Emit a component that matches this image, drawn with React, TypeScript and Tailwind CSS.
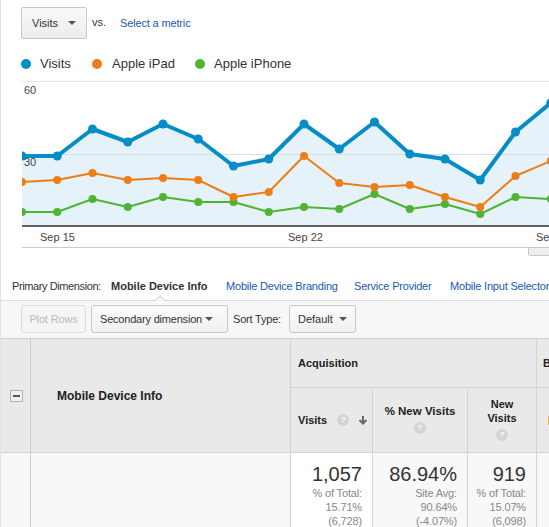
import React from "react";

const xs = Array.from({ length: 16 }, (_, i) => 22 + i * 35.25);
const visits = [156, 156, 129, 142, 124, 139, 166, 159, 124, 149, 122, 154, 159, 180, 132, 103];
const ipad = [182, 180, 173, 180, 178, 180, 197, 192, 156, 183, 187, 185, 197, 207, 176, 161];
const iphone = [212, 212, 199, 207, 197, 202, 202, 212, 207, 209, 194, 209, 204, 214, 197, 199];

const pts = (ys: number[]) => ys.map((y, i) => `${xs[i]},${y}`).join(" ");

const FONT = "Liberation Sans, Arial, sans-serif";

function Caret() {
  return <span className="h-0 w-0 border-x-[4px] border-t-[4px] border-x-transparent border-t-[#555]" />;
}

function Help() {
  return (
    <span className="inline-flex h-[12px] w-[12px] items-center justify-center rounded-full bg-[#d4d4d4] text-[8px] font-bold leading-none text-white">
      ?
    </span>
  );
}

function Series({ ys, color, width, r }: { ys: number[]; color: string; width: number; r: number }) {
  return (
    <g>
      <polyline points={pts(ys)} fill="none" stroke={color} strokeWidth={width} strokeLinejoin="round" />
      {ys.map((y, i) => (
        <circle key={i} cx={xs[i]} cy={y} r={r} fill={color} />
      ))}
    </g>
  );
}

function Chart() {
  return (
    <svg width={548} height={199} viewBox="1 76 548 199" className="mt-[4px] block">
      <defs>
        <clipPath id="plot">
          <rect x={22} y={76} width={540} height={151} />
        </clipPath>
      </defs>
      <line x1={22} x2={549} y1={81.5} y2={81.5} stroke="#e6e6e6" />
      <g clipPath="url(#plot)">
        <polygon points={`22,226 ${pts(visits)} 551,226`} fill="#e5f2f9" />
        <line x1={22} x2={549} y1={154.5} y2={154.5} stroke="#d5e0e6" />
        <Series ys={iphone} color="#50b432" width={2} r={4} />
        <Series ys={ipad} color="#ed7e17" width={2} r={4} />
        <Series ys={visits} color="#058dc7" width={4} r={4.5} />
      </g>
      <line x1={22} x2={549} y1={226} y2={226} stroke="#333" strokeWidth={1.5} />
      <text x={24} y={94} fontFamily={FONT} fontSize={11} fill="#444">60</text>
      <text x={24} y={166} fontFamily={FONT} fontSize={11} fill="#444">30</text>
      <text x={40} y={241} fontFamily={FONT} fontSize={11} fill="#444">Sep 15</text>
      <text x={288} y={241} fontFamily={FONT} fontSize={11} fill="#444">Sep 22</text>
      <text x={536} y={241} fontFamily={FONT} fontSize={11} fill="#444">Sep 29</text>
      <line x1={22} x2={549} y1={247.5} y2={247.5} stroke="#cccccc" />
      <rect x={528.5} y={247.5} width={30} height={8} rx={1} fill="#efefef" stroke="#c8c8c8" />
    </svg>
  );
}

function DataCell({ big, lines, white }: { big: string; lines: string[]; white?: boolean }) {
  return (
    <div className={`h-full pr-[10px] pt-[9px] text-right ${white ? "bg-white" : "bg-[#f8f8f8]"}`}>
      <div className="text-[20px] leading-[24px] text-[#333]">{big}</div>
      {lines.map((l, i) => (
        <div key={i} className="text-[11px] leading-[14px] tracking-[-0.15px] text-[#888]">
          {l}
        </div>
      ))}
    </div>
  );
}

export default function App() {
  return (
    <div className="relative h-[527px] w-[549px] overflow-hidden border-l border-[#e2e2e2] bg-white font-['Liberation_Sans',Arial,sans-serif] text-[11px] text-[#333]">
      {/* metric selector */}
      <div className="flex items-center whitespace-nowrap pl-[20px] pt-[7px]">
        <div className="flex h-[32px] w-[66px] shrink-0 items-center rounded-[2px] border border-[#c8c8c8] bg-gradient-to-b from-[#f9f9f9] to-[#ececec] pl-[10px] text-[11px] text-[#333]">
          <span>Visits</span>
          <span className="ml-auto mr-[10px] flex">
            <Caret />
          </span>
        </div>
        <span className="ml-[5px] w-[28px] shrink-0 -translate-y-[1px] text-[11px] text-[#333]">vs.</span>
        <span className="text-[11px] tracking-[-0.15px] text-[#2158b5]">Select a metric</span>
      </div>

      {/* legend */}
      <div className="mt-[17px] flex h-[16px] items-center whitespace-nowrap pl-[20px] text-[13px] text-[#333]">
        <div className="flex w-[71px] shrink-0 items-center">
          <span className="h-[10px] w-[10px] rounded-full bg-[#058dc7]" />
          <span className="ml-[9px]">Visits</span>
        </div>
        <div className="flex w-[103px] shrink-0 items-center">
          <span className="h-[10px] w-[10px] rounded-full bg-[#ed7e17]" />
          <span className="ml-[10px]">Apple iPad</span>
        </div>
        <div className="flex shrink-0 items-center">
          <span className="h-[10px] w-[10px] rounded-full bg-[#50b432]" />
          <span className="ml-[9px]">Apple iPhone</span>
        </div>
      </div>

      <Chart />

      {/* primary dimension */}
      <div className="relative flex h-[26px] items-center whitespace-nowrap border-b border-[#dddddd] pb-[3px] pl-[11px] text-[11px]">
        <span className="w-[99px] shrink-0 tracking-[-0.4px] text-[#333]">Primary Dimension:</span>
        <span className="w-[115px] shrink-0 font-bold text-[#333]">Mobile Device Info</span>
        <span className="w-[128px] shrink-0 tracking-[-0.2px] text-[#2158b5]">Mobile Device Branding</span>
        <span className="w-[96px] shrink-0 tracking-[-0.2px] text-[#2158b5]">Service Provider</span>
        <span className="shrink-0 tracking-[-0.2px] text-[#2158b5]">Mobile Input Selector</span>
        <div className="absolute left-[153px] top-[19px] z-10 h-[7px] w-[12px] overflow-hidden">
          <div className="absolute left-[2px] top-[3px] h-[8px] w-[8px] rotate-45 border-l border-t border-[#d6d6d6] bg-[#f7f7f7]" />
        </div>
      </div>

      {/* toolbar */}
      <div className="flex h-[37px] items-start whitespace-nowrap bg-[#f7f7f7] pl-[20px] pt-[4px] text-[11px]">
        <div className="flex h-[28px] w-[65px] shrink-0 items-center justify-center rounded-[3px] border border-[#dcdcdc] bg-[#f5f5f5] tracking-[-0.15px] text-[#bbbbbb]">
          Plot Rows
        </div>
        <div className="ml-[5px] flex h-[28px] w-[137px] shrink-0 items-center rounded-[3px] border border-[#c8c8c8] bg-gradient-to-b from-[#fdfdfd] to-[#f0f0f0] pl-[8px] text-[#333]">
          <span className="tracking-[-0.2px]">Secondary dimension</span>
          <span className="ml-auto mr-[14px] flex">
            <Caret />
          </span>
        </div>
        <div className="ml-[5px] flex h-[28px] w-[56px] shrink-0 items-center tracking-[-0.2px] text-[#333]">Sort Type:</div>
        <div className="flex h-[28px] w-[67px] shrink-0 items-center rounded-[3px] border border-[#c8c8c8] bg-gradient-to-b from-[#fdfdfd] to-[#f0f0f0] pl-[8px] text-[#333]">
          <span>Default</span>
          <span className="ml-auto mr-[8px] flex">
            <Caret />
          </span>
        </div>
      </div>

      {/* table */}
      <div className="flex border-t border-[#cfcfcf]">
        {/* checkbox column */}
        <div className="flex w-[30px] shrink-0 flex-col border-r border-[#cccccc]">
          <div className="flex h-[114px] items-center justify-center border-b border-[#d4d4d4] bg-[#e9e9e9] pl-[2px]">
            <span className="flex h-[12px] w-[13px] items-center justify-center border border-[#b4b4b4] bg-[#efefef]">
              <span className="h-[2px] w-[7px] bg-[#555]" />
            </span>
          </div>
          <div className="h-[80px] bg-[#f8f8f8]" />
        </div>
        {/* dimension column */}
        <div className="flex w-[260px] shrink-0 flex-col border-r border-[#d4d4d4]">
          <div className="flex h-[114px] items-center border-b border-[#d4d4d4] bg-[#e9e9e9] pl-[26px] text-[12px] font-bold text-[#222]">
            Mobile Device Info
          </div>
          <div className="h-[80px] bg-[#f8f8f8]" />
        </div>
        {/* acquisition group */}
        <div className="flex w-[246px] shrink-0 flex-col border-r border-[#d4d4d4]">
          <div className="flex h-[49px] items-center border-b border-[#d4d4d4] bg-[#e9e9e9] pl-[7px] text-[11px] font-bold text-[#222]">
            Acquisition
          </div>
          <div className="flex h-[65px] border-b border-[#d4d4d4] bg-[#e9e9e9] text-[11px] font-bold text-[#222]">
            <div className="flex w-[82px] shrink-0 items-center border-r border-[#d4d4d4] pl-[7px]">
              <span>Visits</span>
              <span className="ml-[10px] flex">
                <Help />
              </span>
              <svg width="10" height="10" viewBox="0 0 10 10" className="ml-[9px]">
                <path d="M5 1 V8.5 M1.5 5 L5 8.5 L8.5 5" fill="none" stroke="#666" strokeWidth="2" />
              </svg>
            </div>
            <div className="flex w-[95px] shrink-0 flex-col items-center justify-center border-r border-[#d4d4d4] pb-[3px] text-[11.5px] leading-[14px]">
              <span>% New Visits</span>
              <span className="mt-[4px] flex">
                <Help />
              </span>
            </div>
            <div className="flex flex-1 flex-col items-center justify-center pb-[3px] text-center leading-[14px]">
              <span>New</span>
              <span>Visits</span>
              <span className="mt-[4px] flex">
                <Help />
              </span>
            </div>
          </div>
          <div className="flex h-[80px]">
            <div className="w-[82px] shrink-0 border-r border-[#d4d4d4]">
              <DataCell white big="1,057" lines={["% of Total:", "15.71%", "(6,728)"]} />
            </div>
            <div className="w-[95px] shrink-0 border-r border-[#d4d4d4]">
              <DataCell big="86.94%" lines={["Site Avg:", "90.64%", "(-4.07%)"]} />
            </div>
            <div className="flex-1">
              <DataCell big="919" lines={["% of Total:", "15.07%", "(6,098)"]} />
            </div>
          </div>
        </div>
        {/* behavior group (cut off) */}
        <div className="flex w-[100px] shrink-0 flex-col">
          <div className="flex h-[49px] items-center whitespace-nowrap border-b border-[#d4d4d4] bg-[#e9e9e9] pl-[6px] text-[11px] font-bold text-[#222]">
            Behavior
          </div>
          <div className="flex h-[65px] items-center border-b border-[#d4d4d4] bg-[#e9e9e9] pl-[11px]">
            <span className="h-[9px] w-[8px] bg-[#f0b24a]" />
          </div>
          <div className="h-[80px] bg-[#f8f8f8]" />
        </div>
      </div>
    </div>
  );
}
